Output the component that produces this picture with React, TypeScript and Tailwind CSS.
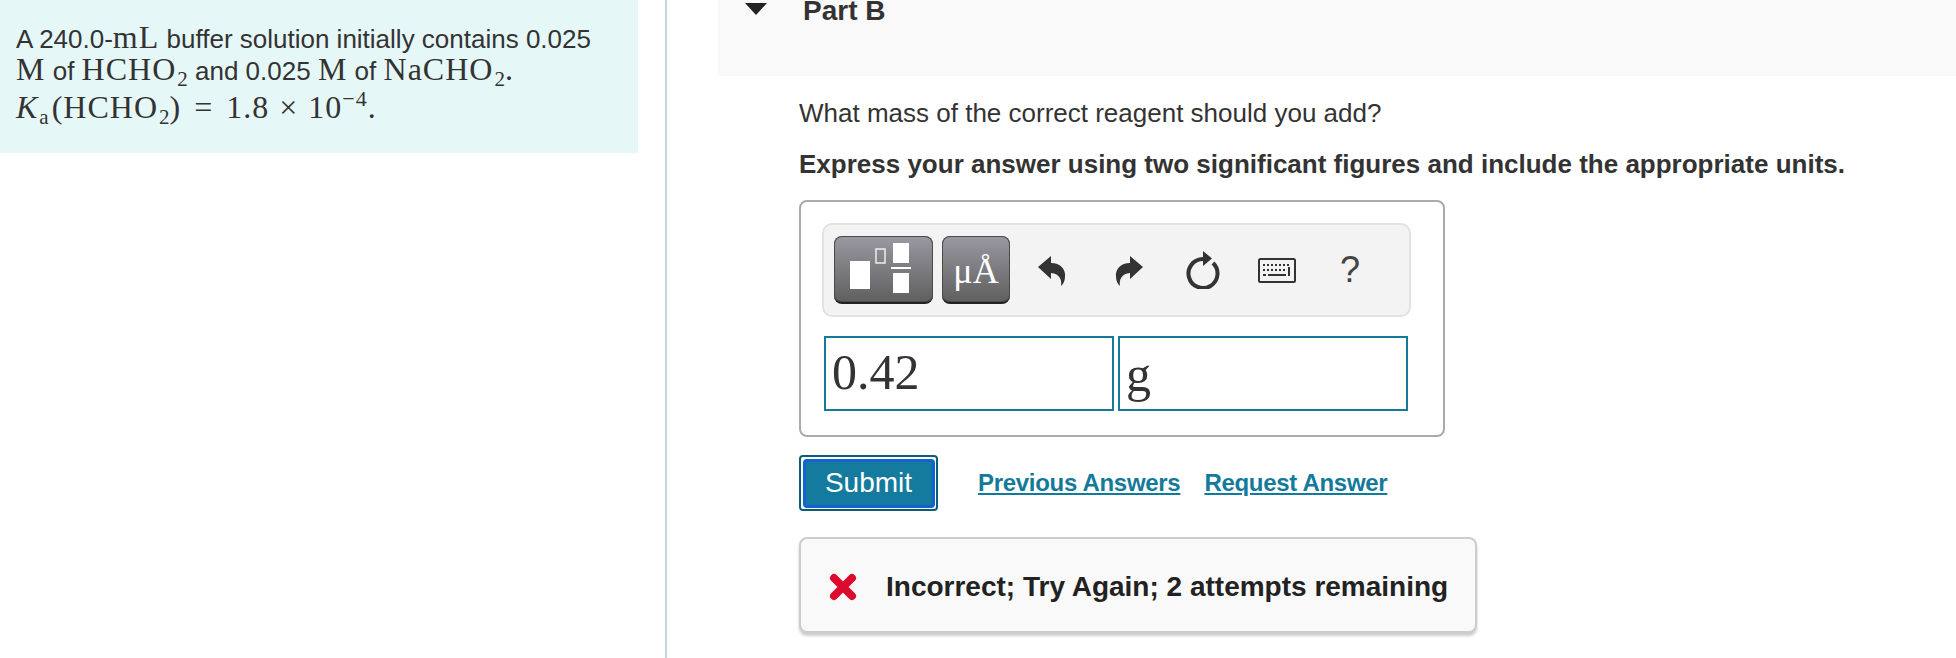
const serif = "font-['Liberation_Serif',serif]"
const math = "font-['Liberation_Serif',serif] text-[32px] tracking-[1px]"

function Sub({ children }: { children: React.ReactNode }) {
  return <span className="relative top-[6px] ml-[1px] text-[21px] leading-none tracking-normal">{children}</span>
}

function Problem() {
  return (
    <aside className="w-[667px] shrink-0 border-r-2 border-[#c5d3e0]">
      <div className="h-[153px] w-[638px] bg-[#e6f7f7] pl-4 pt-[21px] text-[26px] text-[#333]">
        <div className="h-[33px] whitespace-nowrap leading-[33px]">
          A 240.0-<span className={math}>mL</span> buffer solution initially contains 0.025
        </div>
        <div className="h-[31px] whitespace-nowrap leading-[31px]">
          <span className={math}>M</span> of{" "}
          <span className={math}>
            HCHO<Sub>2</Sub>
          </span>{" "}
          and 0.025 <span className={math}>M</span> of{" "}
          <span className={math}>
            NaCHO<Sub>2</Sub>.
          </span>
        </div>
        <div className={`${math} mt-1 h-[37px] whitespace-nowrap leading-[37px]`}>
          <i>K</i>
          <Sub>a</Sub>
          <span className="ml-[3px]">(HCHO</span>
          <Sub>2</Sub>) <span className="mx-[4px]">=</span> 1.8 <span className="mx-[1px]">×</span> 10
          <span className="relative top-[-12px] text-[22px] leading-none">−4</span>.
        </div>
      </div>
    </aside>
  )
}

function FractionIcon() {
  return (
    <svg width="97" height="66" viewBox="0 0 97 66" fill="white">
      <rect x="15" y="25" width="20" height="28" />
      <rect x="41" y="13" width="9" height="14" fill="none" stroke="white" strokeWidth="1.5" opacity="0.85" />
      <rect x="58" y="7" width="16" height="20" />
      <rect x="56" y="31" width="20" height="2" />
      <rect x="58" y="37" width="16" height="20" />
    </svg>
  )
}

function Undo({ flip }: { flip?: boolean }) {
  return (
    <svg width="28" height="31" viewBox="0 0 28 31" className={flip ? "-scale-x-100" : ""}>
      <path
        fill="#333"
        d="M0 12 L13 1 V8 C22 8 28 14 27 22 C26.800 26 25.500 29 23 31 C24 25 22 19 13 18 V24 Z"
      />
    </svg>
  )
}

function Reset() {
  return (
    <svg width="34" height="38" viewBox="0 0 34 38" fill="none">
      <path d="M17 8 A14.500 14.500 0 1 0 27 12" stroke="#333" strokeWidth="4" />
      <path fill="#333" d="M17 0 L26 7.500 L17 15 Z" />
    </svg>
  )
}

function Keyboard() {
  return (
    <svg width="38" height="25" viewBox="0 0 38 25" fill="#333">
      <rect x="1" y="1" width="36" height="23" rx="1.500" fill="none" stroke="#333" strokeWidth="2" />
      <path
        strokeDasharray="2 2"
        stroke="#333"
        strokeWidth="2"
        fill="none"
        d="M5 7 H33 M5 12 H29"
      />
      <rect x="5" y="16" width="3" height="2" />
      <rect x="10" y="16" width="18" height="2" />
      <rect x="30" y="9" width="2" height="9" />
    </svg>
  )
}

function Toolbar() {
  return (
    <div className="flex h-[94px] w-[589px] items-center rounded-[10px] border-2 border-[#e2e2e2] bg-[#f3f3f3] pl-[10px]">
      <div className="flex h-[68px] w-[99px] items-center justify-center rounded-[8px] border-b-2 border-[#222] bg-gradient-to-b from-[#9b99a2] to-[#5f5f5f] shadow-[inset_0_0_0_1px_#4a4a4a]">
        <FractionIcon />
      </div>
      <div
        className={`${serif} ml-[9px] flex h-[68px] w-[68px] items-center justify-center rounded-[8px] border-b-2 border-[#222] bg-gradient-to-b from-[#9b99a2] to-[#5f5f5f] pt-1 text-[36px] text-white shadow-[inset_0_0_0_1px_#4a4a4a]`}
      >
        μÅ
      </div>
      <div className="ml-[5px] flex items-center">
        <div className="flex w-[74px] justify-center">
          <Undo />
        </div>
        <div className="flex w-[80px] justify-center">
          <Undo flip />
        </div>
        <div className="flex w-[68px] justify-center">
          <Reset />
        </div>
        <div className="flex w-[80px] justify-center">
          <Keyboard />
        </div>
        <div className="flex w-[66px] justify-center text-[36px] leading-none text-[#444]">?</div>
      </div>
    </div>
  )
}

function AnswerBox() {
  return (
    <div className="mt-[21px] h-[237px] w-[646px] rounded-[8px] border-2 border-[#aaa] pl-[21px] pt-[21px]">
      <Toolbar />
      <div className={`${serif} ml-[2px] mt-[19px] flex gap-1 text-[50px] text-[#333]`}>
        <div className="h-[75px] w-[290px] border-2 border-[#147a9c] pl-[6px] leading-[68px]">0.42</div>
        <div className="h-[75px] w-[290px] border-2 border-[#147a9c] pl-[6px] leading-[72px]">g</div>
      </div>
    </div>
  )
}

function Actions() {
  return (
    <div className="mt-[18px] flex items-center">
      <button className="h-[56px] w-[139px] rounded-[4px] border-2 border-[#0b5f75] bg-white p-[1.500px]">
        <span className="block h-full rounded-[4px] border-[3px] border-[#1561d1] bg-[#147a9e] text-[28px] leading-[42px] text-white">
          Submit
        </span>
      </button>
      <a className="ml-10 text-[24px] font-bold tracking-[-0.3px] text-[#147a9c] underline">Previous Answers</a>
      <a className="ml-6 text-[24px] font-bold tracking-[-0.3px] text-[#147a9c] underline">Request Answer</a>
    </div>
  )
}

function Feedback() {
  return (
    <div className="mt-[26px] flex h-[96px] w-[678px] items-center rounded-[8px] border-2 border-[#ccc] bg-[#f9f9f9] pl-7 pt-1 shadow-[0_3px_3px_rgba(0,0,0,0.2)]">
      <svg width="28" height="28" viewBox="0 0 28 28">
        <path stroke="#dc0a2d" strokeWidth="8" strokeLinecap="round" d="M5 5 L23 23 M23 5 L5 23" />
      </svg>
      <span className="ml-[29px] whitespace-nowrap text-[28px] font-bold text-[#222]">
        Incorrect; Try Again; 2 attempts remaining
      </span>
    </div>
  )
}

export default function App() {
  return (
    <div className="flex h-[658px] w-[1956px] overflow-hidden bg-white font-['Liberation_Sans',sans-serif]">
      <Problem />
      <main className="flex-1 pl-[51px]">
        <div className="flex h-[76px] items-start bg-[#f9f9f9] pl-[27px]">
          <svg width="22" height="12" viewBox="0 0 22 12" className="mt-[3px]">
            <path fill="#222" d="M0 0 H22 L11 12 Z" />
          </svg>
          <span className="ml-9 text-[28px] font-bold leading-[22px] text-[#333]">Part B</span>
        </div>
        <div className="pl-[81px]">
          <p className="mt-[22px] text-[26px] leading-[30px] text-[#333]">What mass of the correct reagent should you add?</p>
          <p className="mt-[21px] text-[26px] font-bold leading-[30px] text-[#333]">
            Express your answer using two significant figures and include the appropriate units.
          </p>
          <AnswerBox />
          <Actions />
          <Feedback />
        </div>
      </main>
    </div>
  )
}
